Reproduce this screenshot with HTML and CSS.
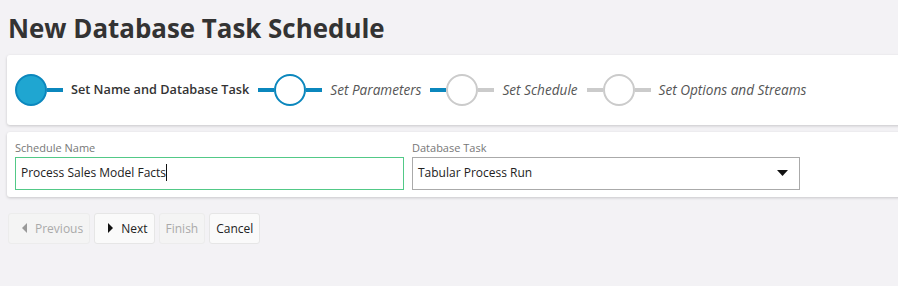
FILE: index.html
```html
<!DOCTYPE html>
<html>
<head>
<meta charset="utf-8">
<link rel="stylesheet" href="styles.css">
</head>
<body>
<h1 class="title">New Database Task Schedule</h1>
<div class="card stepper">
  <div class="step done">
    <span class="circle"></span><span class="bar"></span>
    <span class="label">Set Name and Database Task</span>
  </div>
  <div class="step current">
    <span class="bar"></span><span class="circle"></span><span class="bar"></span>
    <span class="label">Set Parameters</span>
  </div>
  <div class="step todo">
    <span class="bar blue"></span><span class="circle"></span><span class="bar"></span>
    <span class="label">Set Schedule</span>
  </div>
  <div class="step todo">
    <span class="bar"></span><span class="circle"></span><span class="bar"></span>
    <span class="label">Set Options and Streams</span>
  </div>
</div>
<div class="card form">
  <div class="field name">
    <div class="flabel">Schedule Name</div>
    <div class="input focus">Process Sales Model Facts<span class="caret"></span></div>
  </div>
  <div class="field task">
    <div class="flabel">Database Task</div>
    <div class="input select">Tabular Process Run<svg class="arrow" width="11" height="6" viewBox="0 0 11 6"><path d="M0 0H11L5.5 6Z" fill="#111"/></svg></div>
  </div>
</div>
<div class="buttons">
  <button class="btn disabled"><svg width="5" height="10" viewBox="0 0 5 10"><path d="M5 0V10L0 5Z" fill="#999"/></svg>Previous</button>
  <button class="btn"><svg width="5" height="10" viewBox="0 0 5 10"><path d="M0 0V10L5 5Z" fill="#111"/></svg>Next</button>
  <button class="btn disabled">Finish</button>
  <button class="btn">Cancel</button>
</div>
</body>
</html>
```
FILE: styles.css
```css
html, body {
  margin: 0;
  padding: 0;
}
body {
  background: #f3f2f5;
  font-family: "Open Sans", "Liberation Sans", sans-serif;
  color: #333;
  padding: 8px 0 0 8px;
  overflow: hidden;
  width: 898px;
  height: 286px;
  box-sizing: border-box;
}
.title {
  margin: 0;
  font-size: 25.9px;
  font-weight: 700;
  color: #333;
  line-height: 40px;
  letter-spacing: 0;
}
.card {
  background: #fff;
  border-radius: 3px;
  box-shadow: 0 1px 3px rgba(0,0,0,0.18);
  margin-left: -1px;
  width: 1000px;
  box-sizing: border-box;
}
.stepper {
  margin-top: 7px;
  height: 70px;
  display: flex;
  align-items: center;
  padding-left: 8px;
}
.step {
  display: flex;
  align-items: center;
}
.circle {
  width: 32px;
  height: 32px;
  box-sizing: border-box;
  border-radius: 50%;
  border: 2px solid #0b87bd;
  background: #fff;
}
.done .circle {
  background: #1fa6d1;
}
.todo .circle {
  border-color: #cbcbcb;
}
.bar {
  width: 16px;
  height: 4px;
  background: #0b87bd;
}
.todo .bar { background: #cbcbcb; }
.todo .bar.blue { background: #0b87bd; }
.label {
  font-size: 12.7px;
  margin-left: 8px;
  margin-right: 9px;
  color: #333;
  position: relative;
  top: -1px;
}
.done .label { font-weight: 600; }
.current .label, .todo .label {
  font-style: italic;
  font-size: 13.6px;
  color: #555;
}
.form {
  margin-top: 7px;
  height: 65px;
  display: flex;
  padding: 8px 0 0 8px;
  gap: 8px;
}
.flabel {
  font-size: 11px;
  color: #777;
  line-height: 16px;
  margin-bottom: 1px;
}
.input {
  height: 33px;
  box-sizing: border-box;
  border: 1px solid #aaa;
  font-size: 12px;
  color: #222;
  display: flex;
  align-items: center;
  padding-left: 5px;
  padding-bottom: 2px;
  background: #fff;
}
.name .input { width: 389px; }
.task .input { width: 388px; }
.input.focus { border-color: #52c987; }
.caret {
  display: inline-block;
  width: 1px;
  height: 17px;
  background: #111;
  margin-left: 0;
}
.arrow {
  margin-left: auto;
  margin-right: 11px;
}
.buttons {
  margin-top: 16px;
  display: flex;
  gap: 4px;
}
.btn {
  font-family: "Open Sans", "Liberation Sans", sans-serif;
  font-size: 12px;
  height: 31px;
  border: 1px solid #e6e6e6;
  border-radius: 3px;
  background: #fafafa;
  color: #222;
  padding: 0 6px 1px;
  display: flex;
  align-items: center;
  gap: 8px;
}
.btn svg { margin-left: 7px; }
.btn.disabled {
  color: #aaa;
  background: #f4f4f4;
  border-color: #ececec;
}
```
